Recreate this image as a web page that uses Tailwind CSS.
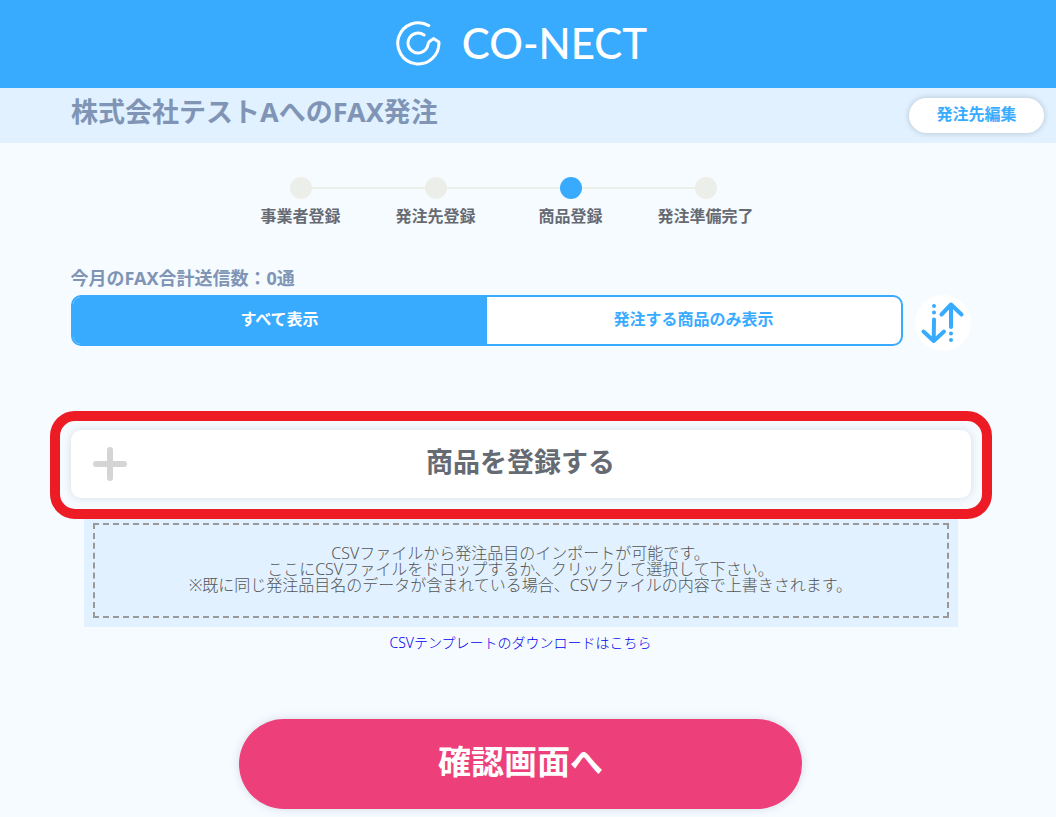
<!DOCTYPE html>
<html lang="ja">
<head>
    <meta charset="UTF-8">
    <meta name="viewport" content="width=device-width, initial-scale=1.0">
    <title>CO-NECT</title>
    <script src="https://cdn.jsdelivr.net/npm/@tailwindcss/browser@4"></script>
</head>
<body class="min-h-screen bg-[#f6fbff] text-[#666a73] font-['Noto_Sans','Noto_Sans_CJK_JP',sans-serif]">

    <header class="flex items-center justify-center gap-5 h-22 pb-[2px] pr-[15px] bg-[#39abff] text-white">
        <svg class="w-12 h-12" viewBox="0 0 48 48" fill="none" stroke="currentColor" stroke-width="3" stroke-linecap="round" stroke-linejoin="round" aria-hidden="true">
            <path d="M34.8 6.600A20.600 20.600 0 1 0 44.900 23L39.500 19.600L35.500 22.500C33.500 24 34.200 26 33.200 28A10 10 0 1 1 30 16"/>
        </svg>
        <span class="font-['Lato',sans-serif] text-[42px] leading-12 font-medium">CO-NECT</span>
    </header>

    <!-- Page title -->
    <div class="flex items-start justify-between h-[55px] pl-[71px] pr-3 bg-[#e1f1ff]">
        <h1 class="pt-1 text-[27px] leading-10 font-bold text-[#8095b5]">株式会社テストAへのFAX発注</h1>
        <button type="button" class="mt-[10px] w-[135px] h-[35px] pb-1 rounded-full bg-white text-base leading-6 font-bold text-[#39abff] shadow-[0_0_6px_rgba(0,0,0,0.2)]">発注先編集</button>
    </div>

    <main class="pl-4 pr-[31px]">
        <!-- Steps -->
        <ol class="flex justify-center pt-[34px] pr-[35px] text-base leading-6 font-bold">
            <li class="relative flex flex-col items-center gap-[5px] w-[135px]">
                <span class="absolute top-[10px] left-1/2 w-full h-[2px] bg-[#ecefe9]"></span>
                <span class="relative size-[22px] rounded-full bg-[#ecefe9]"></span>
                事業者登録
            </li>
            <li class="relative flex flex-col items-center gap-[5px] w-[135px]">
                <span class="absolute top-[10px] left-1/2 w-full h-[2px] bg-[#ecefe9]"></span>
                <span class="relative size-[22px] rounded-full bg-[#ecefe9]"></span>
                発注先登録
            </li>
            <li class="relative flex flex-col items-center gap-[5px] w-[135px]" aria-current="step">
                <span class="absolute top-[10px] left-1/2 w-full h-[2px] bg-[#ecefe9]"></span>
                <span class="relative size-[22px] rounded-full bg-[#39abff]"></span>
                商品登録
            </li>
            <li class="relative flex flex-col items-center gap-[5px] w-[135px]">
                <span class="relative size-[22px] rounded-full bg-[#ecefe9]"></span>
                発注準備完了
            </li>
        </ol>

        <div class="max-w-[900px] mx-auto">
            <p class="mt-9 text-lg leading-7 font-bold text-[#8095b5]">今月のFAX合計送信数：0通</p>

            <!-- Filter and sort -->
            <div class="flex items-start gap-3 mt-[3px]">
                <div class="flex flex-1 h-[51px] rounded-[10px] border-2 border-[#39abff] bg-white overflow-hidden text-base leading-6 font-bold">
                    <button type="button" class="flex-1 pb-1 bg-[#39abff] text-white" aria-pressed="true">すべて表示</button>
                    <button type="button" class="flex-1 pb-1 text-[#39abff]" aria-pressed="false">発注する商品のみ表示</button>
                </div>
                <button type="button" class="size-14 rounded-full bg-white text-[#39abff]" aria-label="並び替え">
                    <svg class="size-14" viewBox="0 0 56 56" fill="none" stroke="currentColor" stroke-width="4" stroke-linecap="round" stroke-linejoin="round">
                        <path d="M19 24.5L18.7 46M8.5 36.5L18.7 46L29 36.5"/>
                        <path d="M36 32V9.5M26.5 19.5L36 9.5L46.5 19.5"/>
                        <path d="M19 11v0M19 17.5v0M36 38.5v0M36 45v0"/>
                    </svg>
                </button>
            </div>

            <!-- Add product -->
            <div class="relative mt-[79px]">
                <button type="button" class="relative flex items-center justify-center w-full h-[68px] pb-1 rounded-[10px] bg-white text-[27px] leading-10 font-bold shadow-[0_0_10px_rgba(80,100,130,0.2)]">
                    <svg class="absolute left-[22px] top-[17px] size-[34px] text-[#d5d5d5]" viewBox="0 0 34 34" fill="none" stroke="currentColor" stroke-width="6" stroke-linecap="round" aria-hidden="true">
                        <path d="M17 3v28M3 17h28"/>
                    </svg>
                    商品を登録する
                </button>
                <span class="absolute -inset-x-[21px] -top-[19px] -bottom-[21px] z-10 rounded-[25px] border-10 border-[#ed1c24] pointer-events-none"></span>
            </div>

            <!-- CSV import -->
            <label for="csv-file" class="block mt-4 mx-[13px] p-[9px] bg-[#e1f1ff] cursor-pointer">
                <span class="block pt-5 pb-[23px] border-2 border-dashed border-[#999] text-center text-base leading-4 font-light text-[#555]">
                    CSVファイルから発注品目のインポートが可能です。<br>
                    ここにCSVファイルをドロップするか、クリックして選択して下さい。<br>
                    ※既に同じ発注品目名のデータが含まれている場合、CSVファイルの内容で上書きされます。
                </span>
                <input type="file" id="csv-file" accept=".csv" class="sr-only">
            </label>
            <p class="mt-1 text-center text-sm leading-6 font-light">
                <a href="#" class="text-[#0000ee]">CSVテンプレートのダウンロードはこちら</a>
            </p>

            <button type="button" class="block w-full max-w-[563px] h-[90px] mt-16 mx-auto mb-2 pb-1 rounded-full bg-[#ed407a] text-[33px] leading-12 font-bold text-white shadow-[0_0_10px_rgba(80,100,130,0.2)]">確認画面へ</button>
        </div>
    </main>
</body>
</html>
